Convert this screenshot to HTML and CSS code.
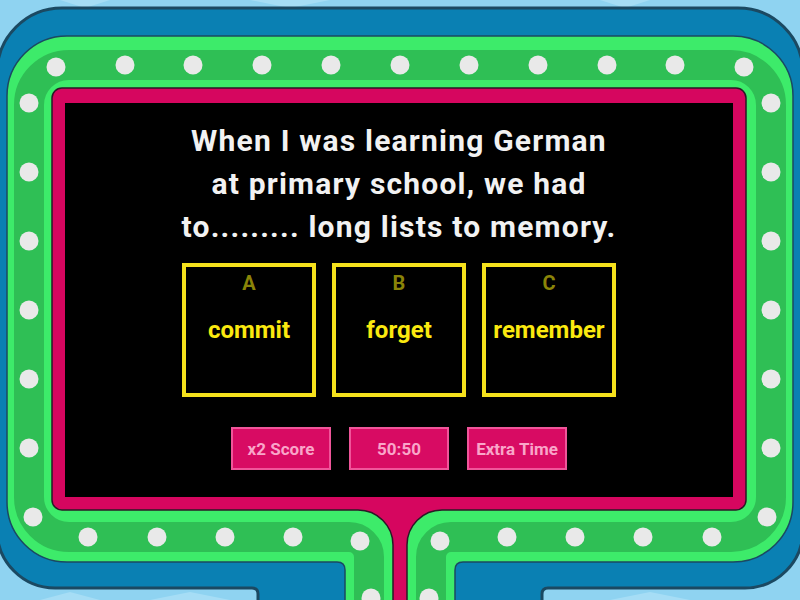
FILE: index.html
```html
<!DOCTYPE html>
<html lang="en">
<head>
    <meta charset="UTF-8">
    <title>Gameshow Quiz</title>
    <link rel="stylesheet" href="styles.css">
</head>
<body>
    <div class="stage">
        <!-- cabinet: sky, blue body, light bulb frame, pink screen -->
        <svg class="frame" width="800" height="600" viewBox="0 0 800 600">
            <rect width="800" height="600" fill="#8fd3f1"/>
            <g fill="#a6ddf5">
                <polygon points="60,0 110,0 85,8"/>
                <polygon points="250,0 330,0 290,8"/>
                <polygon points="600,0 650,0 625,8"/>
                <polygon points="40,600 70,592 100,600"/>
                <polygon points="150,600 190,592 230,600"/>
                <polygon points="610,600 650,592 690,600"/>
            </g>

            <path class="body" d="M 62 8 H 738 A 65 65 0 0 1 803 73 V 530 A 58 58 0 0 1 745 588 H 548 Q 542 588 542 594 V 620 H 258 V 594 Q 258 588 252 588 H 55 A 58 58 0 0 1 -3 530 V 73 A 65 65 0 0 1 62 8 Z"/>

            <path class="lights" d="M 67 36 H 733 A 60 60 0 0 1 793 96 V 502 A 60 60 0 0 1 733 562 H 463 Q 455 562 455 570 V 620 H 345 V 570 Q 345 562 337 562 H 67 A 60 60 0 0 1 7 502 V 96 A 60 60 0 0 1 67 36 Z"/>
            <path class="lights-track" d="M 369 620 V 557 A 20 20 0 0 0 349 537 H 69 A 40 40 0 0 1 29 497 V 105 A 40 40 0 0 1 69 65 H 731 A 40 40 0 0 1 771 105 V 497 A 40 40 0 0 1 731 537 H 451 A 20 20 0 0 0 431 557 V 620"/>

            <g class="bulbs">
                <circle cx="56" cy="67" r="9.5"/>
                <circle cx="125" cy="65" r="9.5"/>
                <circle cx="193" cy="65" r="9.5"/>
                <circle cx="262" cy="65" r="9.5"/>
                <circle cx="331" cy="65" r="9.5"/>
                <circle cx="400" cy="65" r="9.5"/>
                <circle cx="469" cy="65" r="9.5"/>
                <circle cx="538" cy="65" r="9.5"/>
                <circle cx="607" cy="65" r="9.5"/>
                <circle cx="675" cy="65" r="9.5"/>
                <circle cx="744" cy="67" r="9.5"/>

                <circle cx="29" cy="103" r="9.5"/>
                <circle cx="29" cy="172" r="9.5"/>
                <circle cx="29" cy="241" r="9.5"/>
                <circle cx="29" cy="310" r="9.5"/>
                <circle cx="29" cy="379" r="9.5"/>
                <circle cx="29" cy="448" r="9.5"/>
                <circle cx="33" cy="517" r="9.5"/>

                <circle cx="771" cy="103" r="9.5"/>
                <circle cx="771" cy="172" r="9.5"/>
                <circle cx="771" cy="241" r="9.5"/>
                <circle cx="771" cy="310" r="9.5"/>
                <circle cx="771" cy="379" r="9.5"/>
                <circle cx="771" cy="448" r="9.5"/>
                <circle cx="767" cy="517" r="9.5"/>

                <circle cx="88" cy="537" r="9.5"/>
                <circle cx="157" cy="537" r="9.5"/>
                <circle cx="225" cy="537" r="9.5"/>
                <circle cx="293" cy="537" r="9.5"/>
                <circle cx="360" cy="541" r="9.5"/>
                <circle cx="371" cy="598" r="9.5"/>

                <circle cx="712" cy="537" r="9.5"/>
                <circle cx="643" cy="537" r="9.5"/>
                <circle cx="575" cy="537" r="9.5"/>
                <circle cx="507" cy="537" r="9.5"/>
                <circle cx="440" cy="541" r="9.5"/>
                <circle cx="429" cy="598" r="9.5"/>
            </g>

            <path class="screen" d="M 62 88 H 736 A 10 10 0 0 1 746 98 V 500 A 10 10 0 0 1 736 510 H 442 A 35 35 0 0 0 407 545 V 620 H 393 V 545 A 35 35 0 0 0 358 510 H 62 A 10 10 0 0 1 52 500 V 98 A 10 10 0 0 1 62 88 Z"/>
        </svg>

        <div class="board">
            <p class="question">When I was learning German<br>at primary school, we had<br>to......... long lists to memory.</p>

            <div class="answers">
                <div class="answer">
                    <span class="answer-letter">A</span>
                    <span class="answer-text">commit</span>
                </div>
                <div class="answer">
                    <span class="answer-letter">B</span>
                    <span class="answer-text">forget</span>
                </div>
                <div class="answer">
                    <span class="answer-letter">C</span>
                    <span class="answer-text">remember</span>
                </div>
            </div>

            <div class="powerups">
                <button class="powerup">x2 Score</button>
                <button class="powerup">50:50</button>
                <button class="powerup">Extra Time</button>
            </div>
        </div>
    </div>
</body>
</html>
```

FILE: styles.css
```css
body {
    margin: 0;
    background-color: #8fd3f1;
    font-family: Roboto, "Liberation Sans", sans-serif;
}

.stage {
    display: grid;
    width: 800px;
    height: 600px;
    overflow: hidden;
}

/* frame and board share one grid cell */
.stage > * {
    grid-area: 1 / 1;
}

.frame {
    display: block;
}

.body {
    fill: #0a80b3;
    stroke: #1b4962;
    stroke-width: 3;
}

.lights {
    fill: #3deb6a;
    stroke: #1b4962;
    stroke-width: 1.5;
}

.lights-track {
    fill: none;
    stroke: #2fbf55;
    stroke-width: 30;
}

.bulbs {
    fill: #e9e9e9;
}

.screen {
    fill: #d6065f;
    stroke: #2a1a26;
    stroke-width: 1.5;
}

.board {
    box-sizing: border-box;
    width: 668px;
    height: 394px;
    margin: 103px 0 0 65px;
    padding-top: 16px;
    background-color: #000;
    display: flex;
    flex-direction: column;
    align-items: center;
}

.question {
    margin: 0;
    text-align: center;
    color: #f2f2f2;
    font-size: 30px;
    font-weight: 700;
    letter-spacing: 1.2px;
    line-height: 43px;
}

.answers {
    display: flex;
    gap: 16px;
    margin-top: 15px;
}

.answer {
    box-sizing: border-box;
    width: 134px;
    height: 134px;
    padding-top: 4px;
    border: 4px solid #f5e11c;
    display: flex;
    flex-direction: column;
    align-items: center;
}

.answer-letter {
    font-size: 20px;
    font-weight: 700;
    line-height: 24px;
    color: #8a8408;
}

.answer-text {
    margin-top: 21px;
    font-size: 24px;
    font-weight: 700;
    line-height: 28px;
    color: #fbe90f;
}

.powerups {
    display: flex;
    gap: 18px;
    margin-top: 30px;
}

.powerup {
    width: 100px;
    height: 43px;
    padding: 0;
    background-color: #d80b63;
    border: 2px solid #f0559a;
    color: #f9a6c9;
    font-family: Roboto, "Liberation Sans", sans-serif;
    font-size: 17px;
    font-weight: 700;
}
```
